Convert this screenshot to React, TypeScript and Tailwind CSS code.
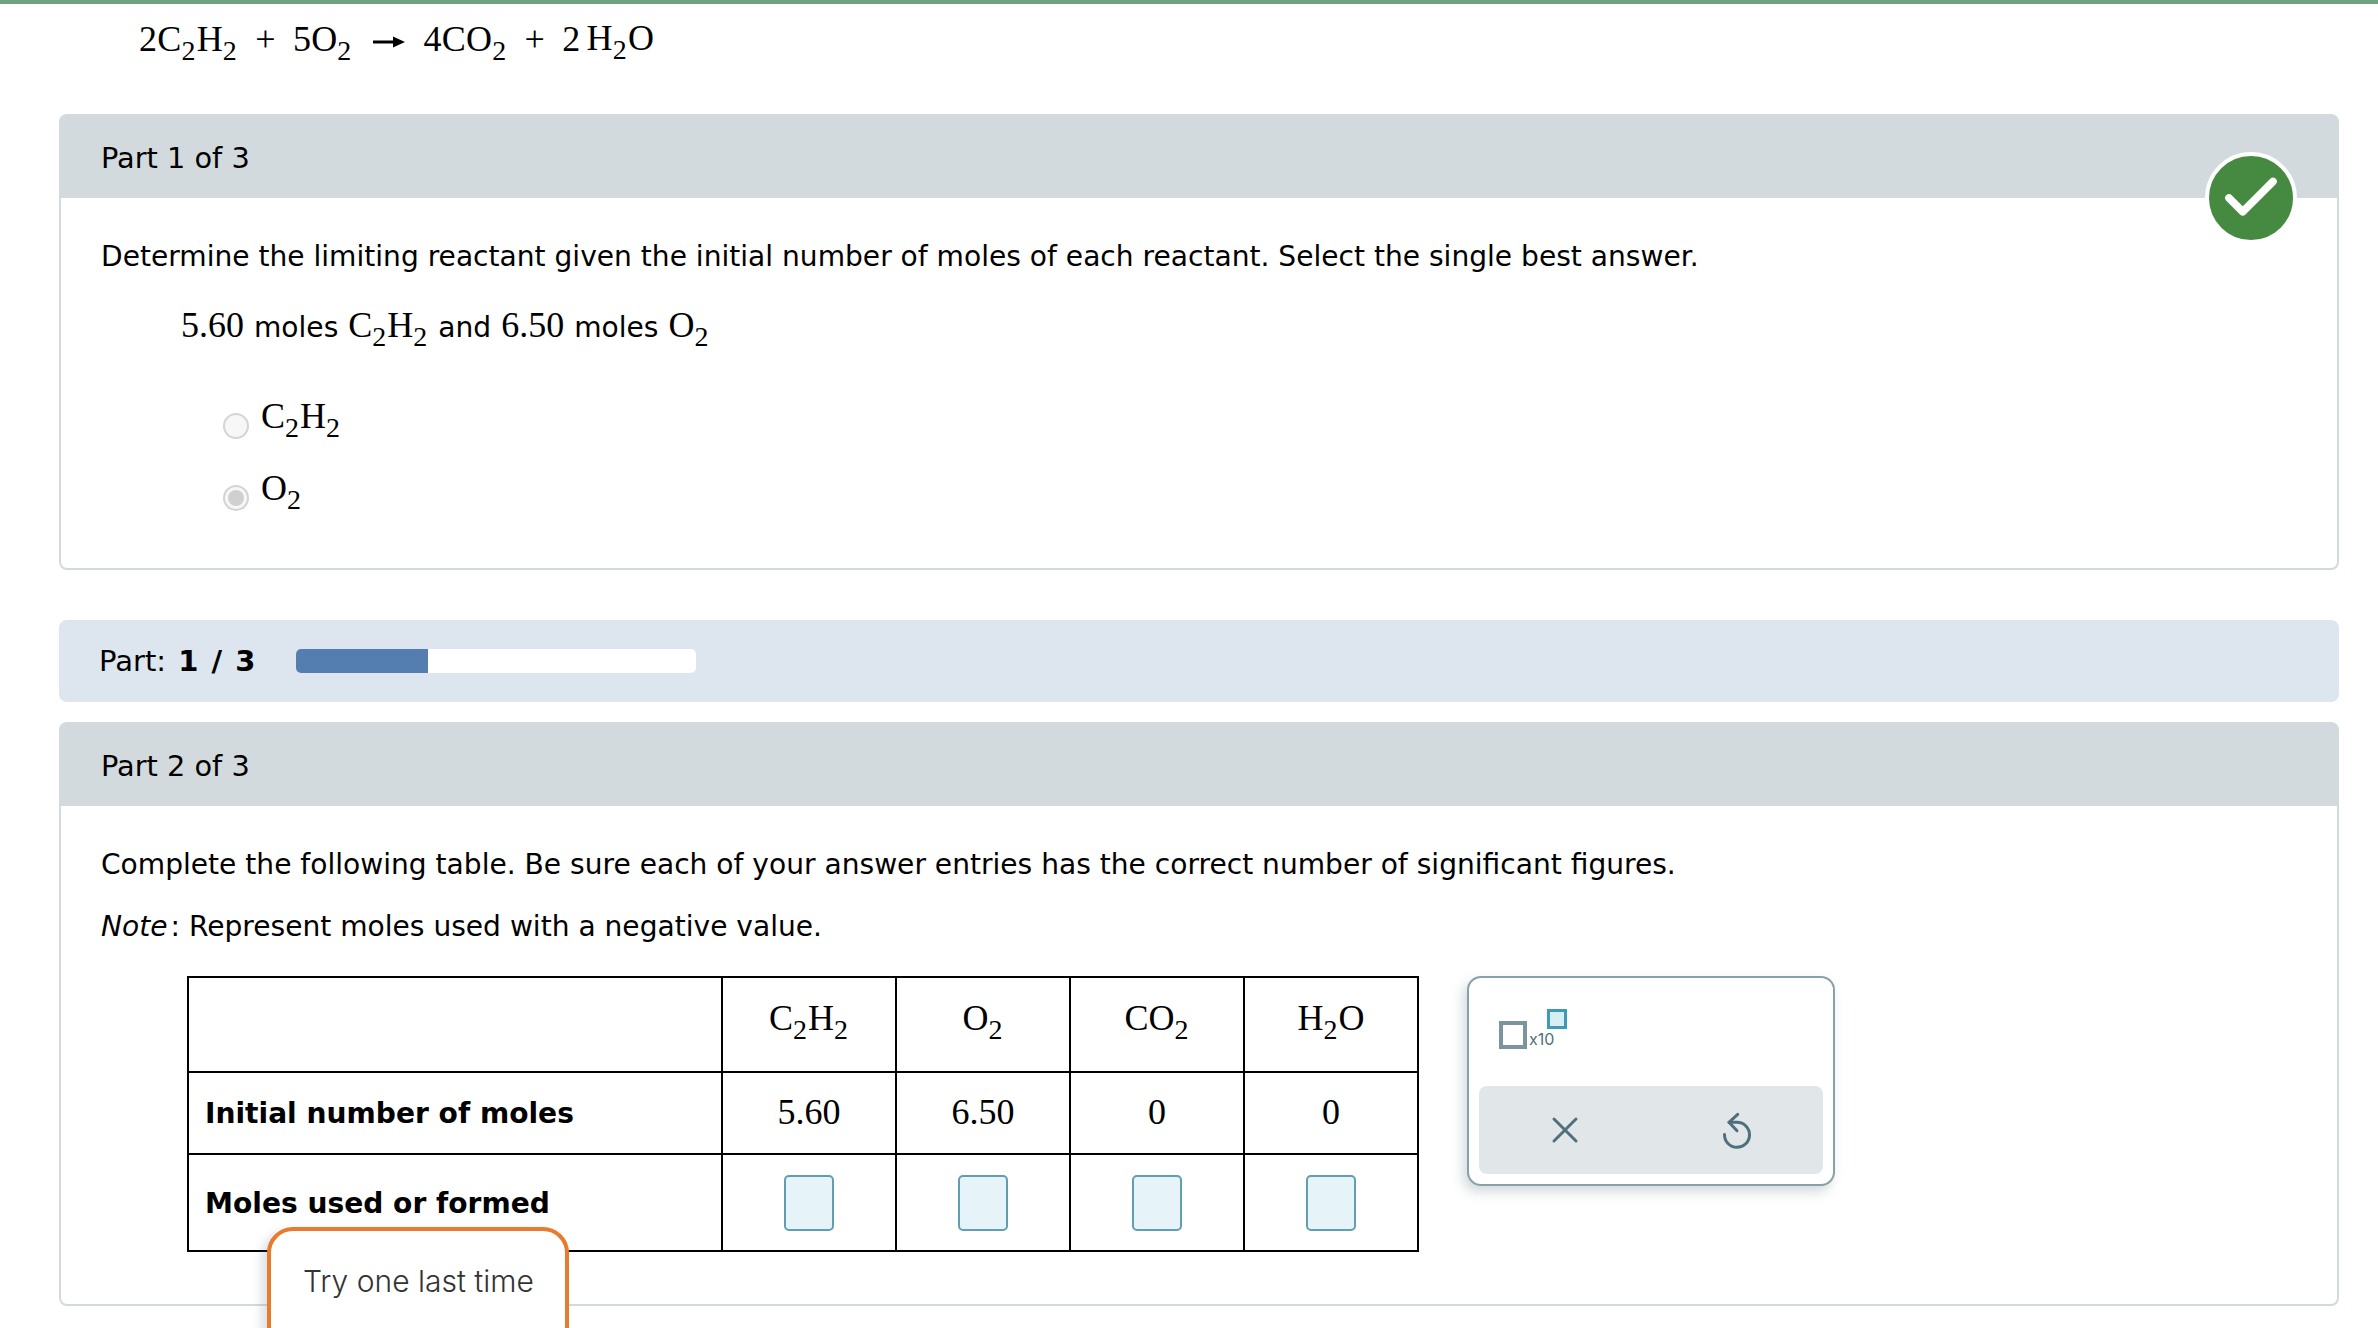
const sans = 'font-["DejaVu_Sans",sans-serif]';
const serif = 'font-["Liberation_Serif",serif]';

// C2H2 style formula, a digit right after a capital letter drops down
function Formula({ text }: { text: string }) {
  return (
    <span className={`${serif} text-[36px] leading-none text-black [word-spacing:8px]`}>
      {text.split(/(?<=[A-Z])(\d)/).map((part, i) =>
        i % 2 === 1 ? (
          <span key={i} className="relative top-[9px] mr-[1px] text-[28px] leading-none">
            {part}
          </span>
        ) : (
          <span key={i}>{part}</span>
        ),
      )}
    </span>
  );
}

function PartHeader({ label }: { label: string }) {
  return (
    <div className="flex h-[84px] items-center rounded-t-lg bg-[#d3dadd] pl-[42px] pt-[6px] text-[28.8px] text-black">
      {label}
    </div>
  );
}

function Radio({ selected }: { selected?: boolean }) {
  return (
    <span className="flex h-[26px] w-[26px] items-center justify-center rounded-full border-2 border-[#d4d4d4] bg-[#f7f7f7]">
      {selected && <span className="h-[16px] w-[16px] rounded-full bg-[#d0d0d0]" />}
    </span>
  );
}

function AnswerBox() {
  return <div className="mx-auto h-[56px] w-[50px] rounded-[5px] border-2 border-[#5f9fb0] bg-[#e6f3f8]" />;
}

const species = ['C2H2', 'O2', 'CO2', 'H2O'];
const initial = ['5.60', '6.50', '0', '0'];

export default function App() {
  return (
    <div className={`${sans} relative h-[1328px] w-[2378px] overflow-hidden border-t-4 border-[#6fa27e] bg-white`}>
      <div className="flex h-[110px] items-start pl-[139px] pt-[16px]">
        <div className="flex items-center whitespace-pre tracking-[0.2px]">
          <Formula text="2C2H2 + 5O2" />
          <svg width="33" height="14" viewBox="0 0 33 14" className="mx-[19px] mt-[6px]">
            <path d="M1 7h22" stroke="#000" strokeWidth="3" />
            <path d="M33 7l-12-5.5v11z" fill="#000" />
          </svg>
          <Formula text="4CO2 + 2" />
          <span className="ml-[6px]">
            <Formula text="H2O" />
          </span>
        </div>
      </div>

      <div className="ml-[59px] flex w-[2280px] flex-col">
        <section className="relative">
          <PartHeader label="Part 1 of 3" />
          <div className="h-[372px] rounded-b-lg border-x-2 border-b-2 border-[#d3dadd] pl-[40px] pt-[38px] text-[28.1px] text-black">
            <p>Determine the limiting reactant given the initial number of moles of each reactant. Select the single best answer.</p>
            <p className="mt-[29px] flex items-baseline gap-[10px] pl-[80px]">
              <Formula text="5.60" />
              <span>moles</span>
              <Formula text="C2H2" />
              <span>and</span>
              <Formula text="6.50" />
              <span>moles</span>
              <Formula text="O2" />
            </p>
            <div className="mt-[49px] flex flex-col gap-[16px] pl-[122px]">
              <div className="flex items-center gap-[12px]">
                <Radio />
                <span className="pb-[14px]">
                  <Formula text="C2H2" />
                </span>
              </div>
              <div className="flex items-center gap-[12px]">
                <Radio selected />
                <span className="pb-[14px]">
                  <Formula text="O2" />
                </span>
              </div>
            </div>
          </div>
          <div className="absolute right-[42px] top-[38px] flex h-[92px] w-[92px] items-center justify-center rounded-full border-4 border-white bg-[#468a42]">
            <svg width="66" height="66" viewBox="0 0 24 24" fill="none" stroke="#fff" strokeWidth="2.8" strokeLinecap="round" strokeLinejoin="round">
              <path d="M20 6 9 17l-5-5" />
            </svg>
          </div>
        </section>

        <div className="mt-[50px] flex h-[82px] items-center rounded-lg bg-[#dde6ef] pl-[40px] text-[29px] text-black">
          <span className="w-[197px] pt-[2px]">
            Part: <b className="ml-[3px] [word-spacing:3px]">1 / 3</b>
          </span>
          <div className="h-[24px] w-[400px] overflow-hidden rounded-[5px] bg-white">
            <div className="h-full w-[132px] bg-[#547db0]" />
          </div>
        </div>

        <section className="relative mt-[20px]">
          <PartHeader label="Part 2 of 3" />
          <div className="h-[500px] rounded-b-lg border-x-2 border-b-2 border-[#d3dadd] pl-[40px] pt-[38px] text-[28.1px] text-black">
            <p>Complete the following table. Be sure each of your answer entries has the correct number of significant figures.</p>
            <p className="mt-[20px]">
              <i className="pr-[3px]">Note</i>: Represent moles used with a negative value.
            </p>
            <div className="mt-[28px] flex items-start pl-[86px]">
              <table className="w-[1232px] table-fixed border-collapse border-2 border-black">
                <colgroup>
                  <col className="w-[534px]" />
                  <col />
                  <col />
                  <col />
                  <col />
                </colgroup>
                <tbody>
                  <tr className="h-[95px]">
                    <td className="border-2 border-black" />
                    {species.map((s) => (
                      <td key={s} className="border-2 border-black pb-[8px] text-center">
                        <Formula text={s} />
                      </td>
                    ))}
                  </tr>
                  <tr className="h-[82px]">
                    <td className="border-2 border-black pl-[16px] pt-[2px] font-bold">Initial number of moles</td>
                    {initial.map((v, i) => (
                      <td key={i} className="border-2 border-black pt-[3px] text-center">
                        <Formula text={v} />
                      </td>
                    ))}
                  </tr>
                  <tr className="h-[97px]">
                    <td className="border-2 border-black pl-[16px] pt-[2px] font-bold">Moles used or formed</td>
                    {species.map((s) => (
                      <td key={s} className="border-2 border-black">
                        <AnswerBox />
                      </td>
                    ))}
                  </tr>
                </tbody>
              </table>

              <div className="ml-[48px] flex h-[210px] w-[368px] flex-col rounded-[14px] border-2 border-[#8aa0a8] bg-white p-[10px] shadow-[-4px_6px_12px_rgba(80,110,125,0.25)]">
                <div className="relative h-[98px] font-['Inter',sans-serif]">
                  <div className="absolute left-[20px] top-[33px] h-[28px] w-[28px] border-[4px] border-[#7b959e]" />
                  <span className="absolute left-[50px] top-[43px] text-[16px] leading-none text-[#4f6f7c]">x10</span>
                  <div className="absolute left-[68px] top-[21px] h-[20px] w-[20px] border-[3px] border-[#3f9bb5] bg-[#d6eef4]" />
                </div>
                <div className="grid h-[88px] grid-cols-2 place-items-center rounded-[8px] bg-[#e1e6e9]">
                  <svg width="28" height="28" viewBox="0 0 28 28" fill="none" stroke="#4f6f7c" strokeWidth="3" strokeLinecap="round">
                    <path d="M3 3l22 22M25 3L3 25" />
                  </svg>
                  <svg width="32" height="38" viewBox="0 0 32 38" fill="none" stroke="#4f6f7c" strokeWidth="3" strokeLinecap="round" strokeLinejoin="round">
                    <path d="M16.7 3.3 8 11.3l8 8.4" />
                    <path d="M8 11.3h8A12.5 12.5 0 1 1 3.5 23.5" />
                  </svg>
                </div>
              </div>
            </div>
          </div>
        </section>
      </div>

      <div className="absolute left-[267px] top-[1226px] h-[160px] w-[302px] rounded-[26px] border-[4px] border-[#e87b2f] bg-white pl-[32px] pt-[35px] font-['Inter',sans-serif] text-[30px] font-light leading-none text-[#333] shadow-[-6px_4px_10px_rgba(80,110,125,0.2)] -translate-y-[3px]">
        Try one last time
      </div>
    </div>
  );
}
